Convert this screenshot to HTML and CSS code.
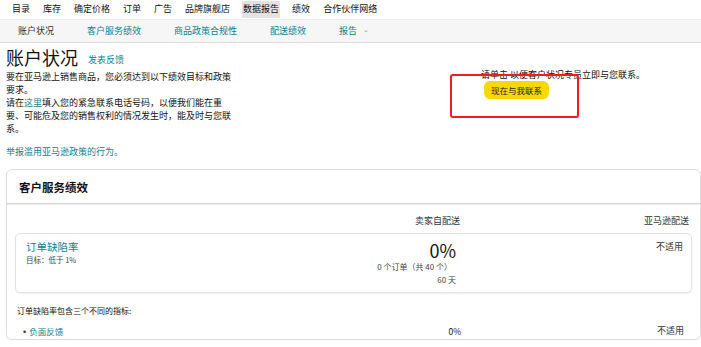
FILE: index.html
```html
<!DOCTYPE html>
<html lang="zh-CN">
<head>
    <meta charset="UTF-8">
    <meta name="viewport" content="width=device-width, initial-scale=1.0">
    <title>账户状况</title>
    <link rel="stylesheet" href="styles.css">
</head>
<body>
    <div class="topnav">
        <span>目录</span>
        <span>库存</span>
        <span>确定价格</span>
        <span>订单</span>
        <span>广告</span>
        <span>品牌旗舰店</span>
        <span class="current">数据报告</span>
        <span>绩效</span>
        <span>合作伙伴网络</span>
    </div>

    <div class="subnav">
        <span class="active">账户状况</span>
        <a>客户服务绩效</a>
        <a>商品政策合规性</a>
        <a>配送绩效</a>
        <a>报告 <span class="caret">⌄</span></a>
    </div>

    <div class="intro">
        <div class="intro-left">
            <h1>账户状况 <a class="feedback">发表反馈</a></h1>
            <p>要在亚马逊上销售商品，您必须达到以下绩效目标和政策要求。<br>请在<a>这里</a>填入您的紧急联系电话号码，以便我们能在重要、可能危及您的销售权利的情况发生时，能及时与您联系。</p>
            <p><a>举报滥用亚马逊政策的行为。</a></p>
        </div>
        <div class="intro-right">
            <p>请单击 以便客户状况专员立即与您联系。</p>
            <button>现在与我联系</button>
            <div class="highlight"></div>
        </div>
    </div>

    <div class="card">
        <div class="card-header">客户服务绩效</div>
        <div class="card-body">
            <div class="col-heads">
                <span></span>
                <span>卖家自配送</span>
                <span>亚马逊配送</span>
            </div>
            <div class="metric">
                <div>
                    <a class="metric-name">订单缺陷率</a>
                    <div class="target">目标：低于 1%</div>
                </div>
                <div class="metric-value">
                    <div class="big">0%</div>
                    <div class="small orders">0 个订单（共 40 个）</div>
                    <div class="small">60 天</div>
                </div>
                <div class="na">不适用</div>
            </div>
            <p class="note">订单缺陷率包含三个不同的指标:</p>
            <div class="sub-row">
                <span><span class="dot">•</span><a>负面反馈</a></span>
                <span class="sub-value">0%</span>
                <span class="na">不适用</span>
            </div>
        </div>
    </div>
</body>
</html>
```

FILE: styles.css
```css
body {
    margin: 0;
    font-family: "Noto Sans CJK SC", "Liberation Sans", sans-serif;
    color: #111;
    background: #fff;
    overflow: hidden;
}
a {
    color: #0f7f8f;
    cursor: pointer;
}
.topnav {
    display: flex;
    gap: 13px;
    padding: 1px 0 0 12px;
    height: 17px;
    font-size: 9px;
    line-height: 15px;
}
.topnav .current {
    background: #e3e3e3;
    padding: 0 1px;
    margin: 0 -1px;
}
.subnav {
    display: flex;
    gap: 33px;
    height: 22px;
    padding-left: 18px;
    margin-top: 1px;
    background: #f6f6f6;
    border-top: 1px solid #ececec;
    border-bottom: 1px solid #dcdcdc;
    font-size: 9px;
    line-height: 21px;
}
.subnav .active {
    color: #333;
}
.subnav .caret {
    color: #999;
    font-size: 7px;
    margin-left: 4px;
    position: relative;
    top: -2px;
}
.intro {
    display: flex;
    padding-left: 6px;
}
.intro-left {
    width: 230px;
}
h1 {
    margin: 4px 0 0;
    font-size: 18px;
    font-weight: normal;
    line-height: 20px;
}
.feedback {
    font-size: 9px;
    margin-left: 6px;
    position: relative;
    top: -2px;
}
.intro-left p {
    margin: -2px 0 10px;
    font-size: 9px;
    line-height: 13px;
}
.intro-left p + p {
    margin-top: 0;
}
.intro-right {
    position: relative;
    margin-left: 245px;
    padding-top: 25px;
    font-size: 9px;
}
.intro-right p {
    margin: 0;
    line-height: 13px;
}
.intro-right button {
    margin: 0 0 0 3px;
    width: 65px;
    height: 18px;
    border: none;
    border-radius: 6px;
    background: #f8d800;
    color: #222;
    font-family: inherit;
    font-size: 8.5px;
    padding: 0;
}
.highlight {
    position: absolute;
    left: -31px;
    top: 31px;
    width: 125px;
    height: 40px;
    border: 2px solid #ee1c24;
    border-radius: 3px;
}
.card {
    margin: 1px 0 0 6px;
    width: 693px;
    border: 1px solid #dedede;
    border-radius: 6px;
    box-shadow: 0 1px 2px rgba(0, 0, 0, 0.05);
}
.card-header {
    height: 33px;
    padding-left: 12px;
    font-size: 11.5px;
    font-weight: bold;
    line-height: 34px;
    border-bottom: 1px solid #d4d4d4;
    box-shadow: 0 1px 1px rgba(0, 0, 0, 0.06);
}
.card-body {
    padding: 10px 8px 0;
}
.col-heads {
    display: grid;
    grid-template-columns: 1fr 120px 229px;
    padding-right: 3px;
    font-size: 9px;
    line-height: 14px;
    color: #333;
    text-align: right;
    margin: 0 0 5px;
}
.metric {
    display: grid;
    grid-template-columns: 1fr 120px 227px;
    height: 60px;
    padding: 6px 8px 0 10px;
    box-sizing: border-box;
    border: 1px solid #e2e2e2;
    border-radius: 5px;
    box-shadow: 0 1px 2px rgba(0, 0, 0, 0.05);
    font-size: 9px;
    line-height: 14px;
}
.metric-name {
    display: block;
    font-size: 10.5px;
    line-height: 14px;
}
.target {
    font-size: 7.5px;
    color: #444;
    line-height: 12px;
}
.metric-value {
    text-align: right;
}
.big {
    font-size: 18px;
    line-height: 20px;
}
.small {
    font-size: 8px;
    color: #444;
    line-height: 13px;
}
.orders {
    margin-right: 4px;
}
.na {
    text-align: right;
    font-size: 9px;
    line-height: 14px;
    color: #333;
}
.note {
    margin: 12px 0 0 2px;
    font-size: 8px;
    line-height: 12px;
}
.sub-row {
    display: grid;
    grid-template-columns: 1fr 120px 223px;
    padding: 7px 8px 0 8px;
    font-size: 8.5px;
    line-height: 14px;
}
.dot {
    margin-right: 3px;
    color: #333;
    font-family: "Liberation Sans", sans-serif;
    font-size: 9px;
}
.sub-value {
    text-align: right;
}
```
